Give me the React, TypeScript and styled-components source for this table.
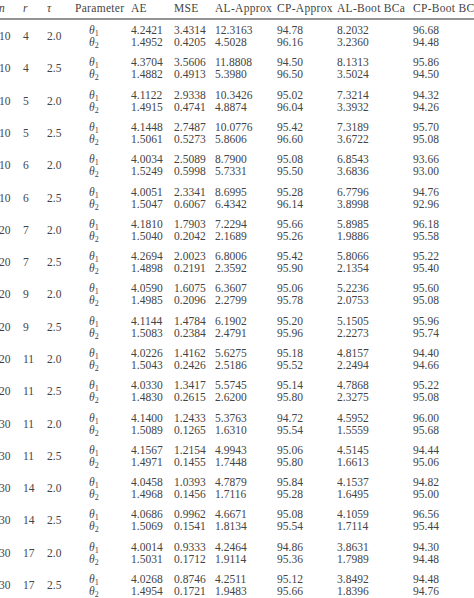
import styled, { createGlobalStyle } from "styled-components";

const GlobalStyle = createGlobalStyle`
  html, body {
    margin: 0;
    padding: 0;
    background: #fff;
    overflow: hidden;
  }
`;

type Group = {
  n: number;
  r: number;
  tau: string;
  values: [string[], string[]];
};

const groups: Group[] = [
  { n: 10, r: 4, tau: "2.0", values: [["4.2421", "3.4314", "12.3163", "94.78", "8.2032", "96.68"], ["1.4952", "0.4205", "4.5028", "96.16", "3.2360", "94.48"]] },
  { n: 10, r: 4, tau: "2.5", values: [["4.3704", "3.5606", "11.8808", "94.50", "8.1313", "95.86"], ["1.4882", "0.4913", "5.3980", "96.50", "3.5024", "94.50"]] },
  { n: 10, r: 5, tau: "2.0", values: [["4.1122", "2.9338", "10.3426", "95.02", "7.3214", "94.32"], ["1.4915", "0.4741", "4.8874", "96.04", "3.3932", "94.26"]] },
  { n: 10, r: 5, tau: "2.5", values: [["4.1448", "2.7487", "10.0776", "95.42", "7.3189", "95.70"], ["1.5061", "0.5273", "5.8606", "96.60", "3.6722", "95.08"]] },
  { n: 10, r: 6, tau: "2.0", values: [["4.0034", "2.5089", "8.7900", "95.08", "6.8543", "93.66"], ["1.5249", "0.5998", "5.7331", "95.50", "3.6836", "93.00"]] },
  { n: 10, r: 6, tau: "2.5", values: [["4.0051", "2.3341", "8.6995", "95.28", "6.7796", "94.76"], ["1.5047", "0.6067", "6.4342", "96.14", "3.8998", "92.96"]] },
  { n: 20, r: 7, tau: "2.0", values: [["4.1810", "1.7903", "7.2294", "95.66", "5.8985", "96.18"], ["1.5040", "0.2042", "2.1689", "95.26", "1.9886", "95.58"]] },
  { n: 20, r: 7, tau: "2.5", values: [["4.2694", "2.0023", "6.8006", "95.42", "5.8066", "95.22"], ["1.4898", "0.2191", "2.3592", "95.90", "2.1354", "95.40"]] },
  { n: 20, r: 9, tau: "2.0", values: [["4.0590", "1.6075", "6.3607", "95.06", "5.2236", "95.60"], ["1.4985", "0.2096", "2.2799", "95.78", "2.0753", "95.08"]] },
  { n: 20, r: 9, tau: "2.5", values: [["4.1144", "1.4784", "6.1902", "95.20", "5.1505", "95.96"], ["1.5083", "0.2384", "2.4791", "95.96", "2.2273", "95.74"]] },
  { n: 20, r: 11, tau: "2.0", values: [["4.0226", "1.4162", "5.6275", "95.18", "4.8157", "94.40"], ["1.5043", "0.2426", "2.5186", "95.52", "2.2494", "94.66"]] },
  { n: 20, r: 11, tau: "2.5", values: [["4.0330", "1.3417", "5.5745", "95.14", "4.7868", "95.22"], ["1.4830", "0.2615", "2.6200", "95.80", "2.3275", "95.08"]] },
  { n: 30, r: 11, tau: "2.0", values: [["4.1400", "1.2433", "5.3763", "94.72", "4.5952", "96.00"], ["1.5089", "0.1265", "1.6310", "95.54", "1.5559", "95.68"]] },
  { n: 30, r: 11, tau: "2.5", values: [["4.1567", "1.2154", "4.9943", "95.06", "4.5145", "94.44"], ["1.4971", "0.1455", "1.7448", "95.80", "1.6613", "95.06"]] },
  { n: 30, r: 14, tau: "2.0", values: [["4.0458", "1.0393", "4.7879", "95.84", "4.1537", "94.82"], ["1.4968", "0.1456", "1.7116", "95.28", "1.6495", "95.00"]] },
  { n: 30, r: 14, tau: "2.5", values: [["4.0686", "0.9962", "4.6671", "95.08", "4.1059", "96.56"], ["1.5069", "0.1541", "1.8134", "95.54", "1.7114", "95.44"]] },
  { n: 30, r: 17, tau: "2.0", values: [["4.0014", "0.9333", "4.2464", "94.86", "3.8631", "94.30"], ["1.5031", "0.1712", "1.9114", "95.36", "1.7989", "94.48"]] },
  { n: 30, r: 17, tau: "2.5", values: [["4.0268", "0.8746", "4.2511", "95.12", "3.8492", "94.48"], ["1.4954", "0.1721", "1.9483", "95.66", "1.8396", "94.76"]] },
];

const columnWidths = [24, 24, 28, 56, 43, 41, 62, 60, 76, 90];

const Table = styled.table`
  margin: 2px 0 0 -1px;
  width: 504px;
  table-layout: fixed;
  border-collapse: collapse;
  font-family: "Liberation Serif", "Times New Roman", serif;
  font-size: 11.5px;
  font-weight: 400;
  color: #444;
`;

const HeadCell = styled.th`
  padding: 0 0 4px 0;
  height: 12px;
  line-height: 12px;
  text-align: left;
  font-weight: 400;
  white-space: nowrap;
  letter-spacing: 0.3px;
  border-bottom: 2px solid #949494;
`;

const Cell = styled.td<{ $first?: boolean }>`
  padding: ${(p) => (p.$first ? "4.15px 0 0 0" : "0 0 4.15px 0")};
  line-height: 12px;
  text-align: left;
  white-space: nowrap;
  vertical-align: top;
`;

const LabelCell = styled.td`
  padding: 0;
  text-align: left;
  vertical-align: middle;
  white-space: nowrap;
  line-height: 12px;
`;

const ParamCell = styled(Cell)`
  padding-left: 14px;
`;

const MathVar = styled.span`
  font-style: italic;
`;

const Sub = styled.sub`
  font-size: 8px;
  vertical-align: -2px;
  line-height: 0;
`;

const headers = ["n", "r", "τ", "Parameter", "AE", "MSE", "AL-Approx", "CP-Approx", "AL-Boot BCa", "CP-Boot BCa"];

export default function App() {
  return (
    <>
      <GlobalStyle />
      <Table>
        <colgroup>
          {columnWidths.map((w, i) => (
            <col key={i} style={{ width: w }} />
          ))}
        </colgroup>
        <thead>
          <tr>
            {headers.map((h, i) => (
              <HeadCell key={h}>{i < 3 ? <MathVar>{h}</MathVar> : h}</HeadCell>
            ))}
          </tr>
        </thead>
        <tbody>
          {groups.map((g, gi) =>
            g.values.map((vals, k) => (
              <tr key={`${gi}-${k}`}>
                {k === 0 && (
                  <>
                    <LabelCell rowSpan={2}>{g.n}</LabelCell>
                    <LabelCell rowSpan={2}>{g.r}</LabelCell>
                    <LabelCell rowSpan={2}>{g.tau}</LabelCell>
                  </>
                )}
                <ParamCell $first={k === 0}>
                  <MathVar>θ</MathVar>
                  <Sub>{k + 1}</Sub>
                </ParamCell>
                {vals.map((v, vi) => (
                  <Cell key={vi} $first={k === 0}>
                    {v}
                  </Cell>
                ))}
              </tr>
            ))
          )}
        </tbody>
      </Table>
    </>
  );
}
